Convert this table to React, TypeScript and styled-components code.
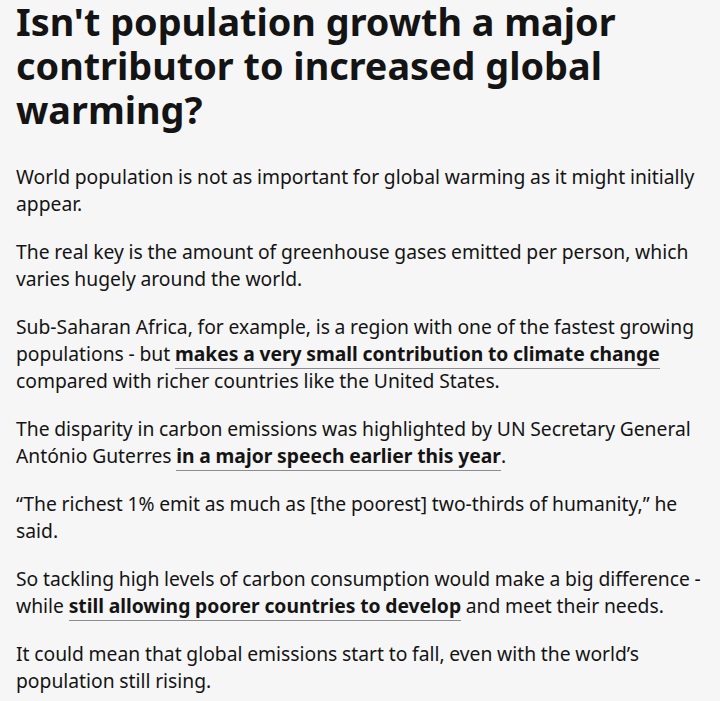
import React from "react";
import styled, { createGlobalStyle } from "styled-components";

const GlobalStyle = createGlobalStyle`
  html, body {
    margin: 0;
    padding: 0;
    background: #f6f6f6;
  }
  body {
    font-family: "Noto Sans", "Open Sans", sans-serif;
    color: #141414;
  }
`;

const Article = styled.article`
  padding: 0 0 0 16px;
  width: 720px;
  box-sizing: border-box;
`;

const Headline = styled.h1`
  margin: 0 0 31px;
  font-size: 37.8px;
  line-height: 44px;
  font-weight: 700;
`;

const Para = styled.p`
  margin: 0 0 21px;
  font-size: 19.3px;
  line-height: 27px;
  word-spacing: -0.3px;
`;

const Link = styled.a`
  font-weight: 700;
  color: #141414;
  text-decoration: none;
  border-bottom: 1px solid #8a8c8e;
  padding-bottom: 1px;
`;

export default function App() {
  return (
    <>
      <GlobalStyle />
      <Article>
        <Headline>
          Isn't population growth a major contributor to increased global
          warming?
        </Headline>
        <Para>
          World population is not as important for global warming as it might
          initially appear.
        </Para>
        <Para>
          The real key is the amount of greenhouse gases emitted per person,
          which varies hugely around the world.
        </Para>
        <Para>
          Sub-Saharan Africa, for example, is a region with one of the fastest
          growing populations - but{" "}
          <Link href="#">makes a very small contribution to climate change</Link>{" "}
          compared with richer countries like the United States.
        </Para>
        <Para>
          The disparity in carbon emissions was highlighted by UN Secretary
          General António Guterres{" "}
          <Link href="#">in a major speech earlier this year</Link>.
        </Para>
        <Para>
          “The richest 1% emit as much as [the poorest] two-thirds of
          humanity,” he said.
        </Para>
        <Para>
          So tackling high levels of carbon consumption would make a big
          difference - while{" "}
          <Link href="#">still allowing poorer countries to develop</Link> and
          meet their needs.
        </Para>
        <Para>
          It could mean that global emissions start to fall, even with the
          world’s population still rising.
        </Para>
      </Article>
    </>
  );
}
